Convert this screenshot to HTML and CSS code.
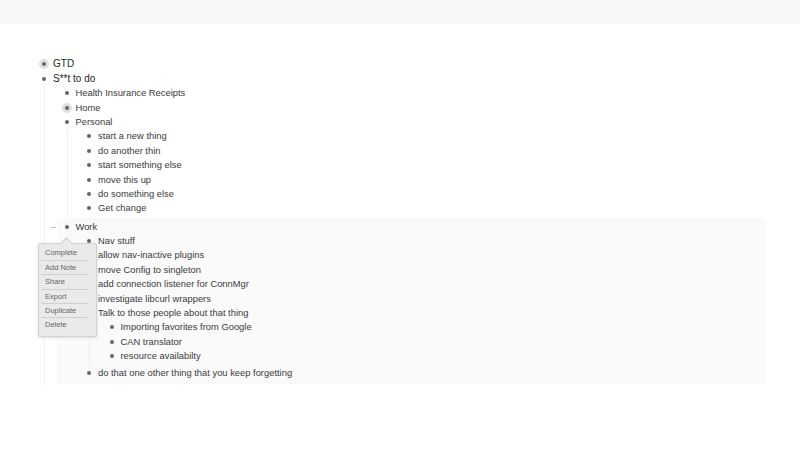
FILE: index.html
```html
<!DOCTYPE html>
<html lang="en">
<head>
<meta charset="utf-8">
<title>Outline</title>
<link rel="stylesheet" href="styles.css">
</head>
<body>
<header class="topbar"></header>
<main class="outline">
  <ul class="tree level0">
    <li class="node"><div class="row"><span class="bullet halo"></span><span class="label">GTD</span></div></li>
    <li class="node">
      <div class="row"><span class="bullet"></span><span class="label">S**t to do</span></div>
      <ul class="children">
        <li class="node"><div class="row"><span class="bullet"></span><span class="label">Health Insurance Receipts</span></div></li>
        <li class="node"><div class="row"><span class="bullet halo"></span><span class="label">Home</span></div></li>
        <li class="node">
          <div class="row"><span class="bullet"></span><span class="label">Personal</span></div>
          <ul class="children">
            <li class="node"><div class="row"><span class="bullet"></span><span class="label">start a new thing</span></div></li>
            <li class="node"><div class="row"><span class="bullet"></span><span class="label">do another thin</span></div></li>
            <li class="node"><div class="row"><span class="bullet"></span><span class="label">start something else</span></div></li>
            <li class="node"><div class="row"><span class="bullet"></span><span class="label">move this up</span></div></li>
            <li class="node"><div class="row"><span class="bullet"></span><span class="label">do something else</span></div></li>
            <li class="node"><div class="row"><span class="bullet"></span><span class="label">Get change</span></div></li>
          </ul>
        </li>
        <li class="node selected">
          <div class="row">
            <span class="toggle">–</span>
            <span class="bullet"></span><span class="label">Work</span>
            <div class="menu">
              <div class="menu-item">Complete</div>
              <div class="menu-item">Add Note</div>
              <div class="menu-item">Share</div>
              <div class="menu-item">Export</div>
              <div class="menu-item">Duplicate</div>
              <div class="menu-item">Delete</div>
            </div>
          </div>
          <ul class="children">
            <li class="node"><div class="row"><span class="bullet"></span><span class="label">Nav stuff</span></div></li>
            <li class="node"><div class="row"><span class="bullet"></span><span class="label">allow nav-inactive plugins</span></div></li>
            <li class="node"><div class="row"><span class="bullet"></span><span class="label">move Config to singleton</span></div></li>
            <li class="node"><div class="row"><span class="bullet"></span><span class="label">add connection listener for ConnMgr</span></div></li>
            <li class="node"><div class="row"><span class="bullet"></span><span class="label">investigate libcurl wrappers</span></div></li>
            <li class="node">
              <div class="row"><span class="bullet"></span><span class="label">Talk to those people about that thing</span></div>
              <ul class="children">
                <li class="node"><div class="row"><span class="bullet"></span><span class="label">Importing favorites from Google</span></div></li>
                <li class="node"><div class="row"><span class="bullet"></span><span class="label">CAN translator</span></div></li>
                <li class="node"><div class="row"><span class="bullet"></span><span class="label">resource availabilty</span></div></li>
              </ul>
            </li>
            <li class="node"><div class="row"><span class="bullet"></span><span class="label">do that one other thing that you keep forgetting</span></div></li>
          </ul>
        </li>
      </ul>
    </li>
  </ul>
</main>
</body>
</html>
```
FILE: styles.css
```css
html, body {
  margin: 0;
  padding: 0;
  background: #fff;
}
body {
  font-family: "Liberation Sans", Arial, sans-serif;
  color: #3a3a3a;
}
.topbar {
  height: 24px;
  background: #f7f7f7;
}
.outline {
  padding: 32px 35px 0 39px;
}
ul {
  list-style: none;
  margin: 0;
  padding: 0;
}
.row {
  position: relative;
  display: flex;
  align-items: center;
  height: 14.4px;
  font-size: 9.375px;
  white-space: nowrap;
}
.level0 > li > .row {
  height: 15px;
  font-size: 10px;
  color: #262626;
}
.bullet {
  flex: none;
  width: 10px;
  height: 10px;
  margin-right: 4px;
  border-radius: 50%;
  display: flex;
  align-items: center;
  justify-content: center;
}
.bullet::before {
  content: "";
  width: 4px;
  height: 4px;
  border-radius: 50%;
  background: #666;
}
.bullet.halo {
  background: #dfdfdf;
}
.children {
  margin-left: 5px;
  border-left: 1px solid #efefef;
  padding-left: 16.5px;
  padding-bottom: 2px;
}
.selected {
  margin-left: -4.5px;
  padding: 2px 0 2px 4.5px;
  background: #fafafa;
}
.selected > .children {
  border-left-color: transparent;
}
.toggle {
  position: absolute;
  left: -11px;
  top: 0;
  line-height: 14.4px;
  color: #999;
}
.menu {
  position: absolute;
  left: -23.5px;
  top: 23.4px;
  z-index: 5;
  box-sizing: content-box;
  width: 48px;
  padding: 2.5px 7px 3px 2px;
  background: #eaeaea;
  border: 1px solid #d2d2d2;
  border-radius: 2px;
  box-shadow: 0 1px 3px rgba(0, 0, 0, 0.12);
}
.menu::before {
  content: "";
  position: absolute;
  left: 23px;
  top: -5px;
  width: 8px;
  height: 8px;
  background: #eaeaea;
  border-top: 1px solid #d2d2d2;
  border-left: 1px solid #d2d2d2;
  transform: rotate(45deg);
}
.menu-item {
  height: 13.4px;
  line-height: 13.4px;
  padding-left: 4px;
  font-size: 7.5px;
  color: #666;
  border-bottom: 1px solid #cfcfcf;
}
.menu-item:last-child {
  border-bottom-color: transparent;
}
```
